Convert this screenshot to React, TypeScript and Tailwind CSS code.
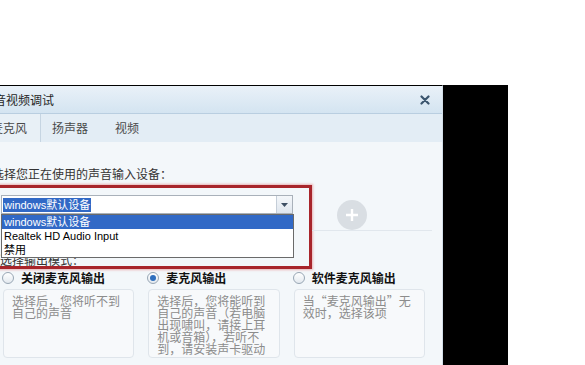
import React from "react";

const cjk = "font-['Noto_Sans_CJK_SC','Noto_Sans_CJK_JP',sans-serif]";
const latin = "font-['Liberation_Sans','Noto_Sans_CJK_SC',sans-serif]";

function Radio({ checked }: { checked?: boolean }) {
  return (
    <span className="flex size-[12px] shrink-0 items-center justify-center rounded-full border border-[#98a6b4] bg-linear-to-b from-white to-[#e3e9ef]">
      {checked && <span className="size-[6px] rounded-full bg-[#2f6fbe]" />}
    </span>
  );
}

const modes = [
  {
    label: "关闭麦克风输出",
    checked: false,
    lines: ["选择后，您将听不到", "自己的声音"],
  },
  {
    label: "麦克风输出",
    checked: true,
    lines: [
      "选择后，您将能听到",
      "自己的声音（若电脑",
      "出现啸叫，请接上耳",
      "机或音箱），若听不",
      "到，请安装声卡驱动",
    ],
  },
  {
    label: "软件麦克风输出",
    checked: false,
    lines: ["当“麦克风输出”无", "效时，选择该项"],
  },
];

export default function App() {
  return (
    <div className={`h-[365px] w-[585px] overflow-hidden bg-white ${cjk}`}>
      <div className="h-[85px]" />
      <div className="flex h-[280px]">
        {/* dialog, left edge cut off by the screenshot */}
        <div className="-ml-[22px] flex w-[465px] shrink-0 flex-col border-t border-r border-t-black border-r-[#d3dee8] bg-[#f3f7fa]">
          <div className="flex h-[28px] shrink-0 items-center justify-between border-b border-[#b9cee0] bg-linear-to-b from-[#e9f1f8] to-[#d4e4f1] pl-[16px] pr-[12px]">
            <span className="text-[12px] leading-none text-[#1f1f1f]">音视频调试</span>
            <svg width="10" height="10" viewBox="0 0 10 10">
              <path d="M1.5 1.5 8.5 8.5M8.5 1.5 1.5 8.5" stroke="#3b556e" strokeWidth="2.2" strokeLinecap="round" />
            </svg>
          </div>

          <div className="flex h-[28px] shrink-0 items-stretch bg-[#e3edf5] text-[12px] text-[#4a4a4a]">
            <div className="flex items-center border-r border-[#c6d5e2] bg-[#e8f0f6] pl-[13px] pr-[13px]">麦克风</div>
            <div className="flex items-center gap-[27px] pl-[11px]">
              <span>扬声器</span>
              <span>视频</span>
            </div>
          </div>

          <div className="flex flex-col pl-[24px]">
            <p className="-ml-[10px] mt-[24px] text-[12px] leading-[16px] text-[#333]">选择您正在使用的声音输入设备：</p>

            <div className="mt-[3px] flex">
              <div className="-ml-[14px] w-[324px] shrink-0 border-[3px] border-[#a8252b] pl-[10px] pt-[7px] shadow-[0_0_2px_1px_rgba(225,120,120,0.55)]">
                <div className="relative">
                  <div className="flex h-[19px] w-[292px] items-center justify-between border border-[#a9b1ba] bg-white pl-[1px]">
                    <span className={`bg-[#3169c6] px-[1px] text-[11px] leading-[14px] text-white ${latin}`}>windows默认设备</span>
                    <span className="flex h-[17px] w-[16px] items-center justify-center border-l border-[#c5ced8] bg-linear-to-b from-[#f4f7fa] to-[#dfe6ee]">
                      <svg width="7" height="4" viewBox="0 0 7 4">
                        <path d="M0 0h7L3.5 4z" fill="#3d4f63" />
                      </svg>
                    </span>
                  </div>
                  <div className={`absolute left-0 top-[19px] z-10 w-[293px] border border-[#6a6a6a] bg-white text-[11px] leading-[14px] text-black ${latin}`}>
                    <div className="bg-[#3169c6] pl-[2px] text-white">windows默认设备</div>
                    <div className="pl-[2px]">Realtek HD Audio Input</div>
                    <div className="pl-[2px]">禁用</div>
                  </div>
                </div>
                <p className="-ml-[1px] mt-[39px] text-[12px] leading-[13px] text-[#333]">选择输出模式：</p>
              </div>

              <div className="ml-0 mr-[10px] h-[46px] flex-1 border-b border-[#e1e7ed] pl-[25px] pt-[15px]">
                <div className="flex size-[30px] items-center justify-center rounded-full bg-[#d9dee3]">
                  <svg width="14" height="14" viewBox="0 0 14 14">
                    <path d="M7 1v12M1 7h12" stroke="white" strokeWidth="2.4" />
                  </svg>
                </div>
              </div>
            </div>

            <div className="mt-[2px] grid w-[423px] grid-cols-3 gap-x-[13px]">
              {modes.map((m) => (
                <div key={m.label} className="flex flex-col">
                  <div className="flex h-[14px] items-center gap-[7px]">
                    <Radio checked={m.checked} />
                    <span className="text-[12px] font-bold leading-none text-[#111]">{m.label}</span>
                  </div>
                  <div className="ml-[1px] mt-[4px] h-[69px] rounded-[4px] border border-[#dfe5eb] bg-[#f7f9fb] pl-[8px] pt-[5px] text-[12px] leading-[12px] text-[#8c8c8c]">
                    {m.lines.map((l) => (
                      <div key={l}>{l}</div>
                    ))}
                  </div>
                </div>
              ))}
            </div>
          </div>
        </div>
        <div className="w-[65px] shrink-0 bg-black" />
      </div>
    </div>
  );
}
